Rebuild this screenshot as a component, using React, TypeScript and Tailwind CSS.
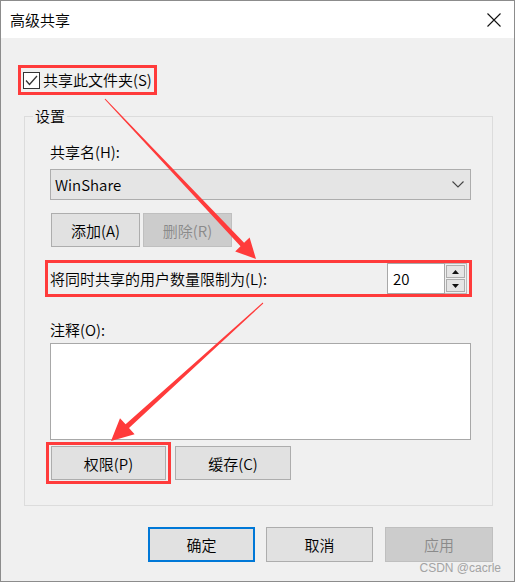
import React from 'react';

const cjk = { fontFamily: '"Noto Sans CJK SC", "Noto Sans", sans-serif', fontWeight: 350 };

function WinButton({
  children,
  className = '',
  disabled = false,
}: {
  children: React.ReactNode;
  className?: string;
  disabled?: boolean;
}) {
  return (
    <div
      className={`flex items-center justify-center border text-[15px] leading-none ${
        disabled
          ? 'bg-[#cccccc] border-[#bfbfbf] text-[#8a8a8a]'
          : 'bg-[#e1e1e1] border-[#adadad] text-black'
      } ${className}`}
    >
      {children}
    </div>
  );
}

function Arrows() {
  return (
    <svg
      className="absolute inset-0 pointer-events-none"
      width="515"
      height="582"
      viewBox="0 0 515 582"
    >
      {/* arrow from checkbox to limit row */}
      <polygon
        fill="#ff3b3b"
        points="103.6,98.3 104.4,97.7 243.1,241.8 248.6,236.6 255,258 234.2,250.4 239.5,245.2"
      />
      {/* arrow from limit row to permissions button */}
      <polygon
        fill="#ff3b3b"
        points="262.3,302.5 261.7,301.5 124.6,423.3 119,417.2 110,440 133.6,433.2 128,427"
      />
    </svg>
  );
}

export default function App() {
  return (
    <div
      className="relative w-[515px] h-[582px] border border-[#8c8c8c] bg-[#f0f0f0] flex flex-col text-black"
      style={cjk}
    >
      {/* Title bar */}
      <div className="h-[37px] bg-white flex items-center justify-between pl-[9px] pr-[13px]">
        <span className="text-[15px] leading-[20px]">高级共享</span>
        <svg width="14" height="14" viewBox="0 0 14 14">
          <path d="M0.5 0.5 L13.5 13.5 M13.5 0.5 L0.5 13.5" stroke="#111" strokeWidth="1.1" />
        </svg>
      </div>

      {/* Body */}
      <div className="flex-1 flex flex-col">
        {/* Share checkbox */}
        <div className="mt-[27px] ml-[17px] w-[139px] h-[30px] border-[3px] border-[#ff3b3b] flex items-center pl-[2px] gap-[3px]">
          <div className="w-[17px] h-[17px] border border-[#333333] bg-white flex items-center justify-center">
            <svg width="13" height="11" viewBox="0 0 13 11">
              <path d="M1 5.5 L4.5 9.5 L12 1" fill="none" stroke="#333" strokeWidth="1.3" />
            </svg>
          </div>
          <span className="text-[15px] leading-[20px] whitespace-nowrap">共享此文件夹(S)</span>
        </div>

        {/* Settings group */}
        <div className="mt-[21px] ml-[23px] w-[469px] h-[390px] border border-[#dcdcdc] flex flex-col">
          <div className="-mt-[11px] ml-[8px] self-start px-[2px] bg-[#f0f0f0] text-[15px] leading-[20px]">
            设置
          </div>

          <div className="pl-[25px] pr-[21px] flex flex-col">
            <div className="mt-[16px] text-[15px] leading-[20px]">共享名(H):</div>

            <div className="mt-[7px] h-[31px] border border-[#adadad] bg-[#e5e5e5] flex items-center justify-between pl-[4px] pr-[6px]">
              <span className="text-[15px] leading-none">WinShare</span>
              <svg width="12" height="7" viewBox="0 0 12 7">
                <path d="M0.5 0.5 L6 6 L11.5 0.5" fill="none" stroke="#444" strokeWidth="1.1" />
              </svg>
            </div>

            <div className="mt-[13px] ml-[1px] flex gap-[3px]">
              <WinButton className="w-[89px] h-[34px]">添加(A)</WinButton>
              <WinButton className="w-[89px] h-[34px]" disabled>
                删除(R)
              </WinButton>
            </div>

            {/* Limit row */}
            <div className="mt-[13px] -ml-[5px] w-[427px] h-[37px] border-[3px] border-[#ff3b3b] flex items-center justify-between pl-[2px] pr-[2px]">
              <span className="text-[15px] leading-[20px] whitespace-nowrap">将同时共享的用户数量限制为(L):</span>
              <div className="flex h-[31px]">
                <div className="w-[58px] h-full border border-[#a8a8a8] bg-white flex items-center pl-[5px]">
                  <span className="text-[15px] leading-none">20</span>
                </div>
                <div className="w-[22px] h-full border border-[#b9b9b9] border-l-0 bg-[#f0f0f0] flex flex-col p-[1px] gap-[1px]">
                  <div className="flex-1 bg-[#e5e5e5] border border-[#adadad] flex items-center justify-center">
                    <svg width="7" height="4" viewBox="0 0 7 4">
                      <path d="M0 4 L3.5 0 L7 4 Z" fill="#111" />
                    </svg>
                  </div>
                  <div className="flex-1 bg-[#e5e5e5] border border-[#adadad] flex items-center justify-center">
                    <svg width="7" height="4" viewBox="0 0 7 4">
                      <path d="M0 0 L3.5 4 L7 0 Z" fill="#111" />
                    </svg>
                  </div>
                </div>
              </div>
            </div>

            <div className="mt-[23px] text-[15px] leading-[20px]">注释(O):</div>
            <div className="mt-[3px] h-[97px] border border-[#a8a8a8] bg-white" />

            <div className="mt-[2px] -ml-[4px] flex items-center gap-[4px]">
              <div className="w-[125px] h-[42px] border-[3px] border-[#ff3b3b] flex items-center justify-center">
                <WinButton className="w-[115px] h-[34px]">权限(P)</WinButton>
              </div>
              <WinButton className="w-[116px] h-[34px]">缓存(C)</WinButton>
            </div>
          </div>
        </div>

        {/* Dialog buttons */}
        <div className="mt-[21px] flex justify-end pr-[21px] gap-[11px]">
          <div className="w-[107px] h-[35px] border-2 border-[#0078d7] bg-[#e1e1e1] flex items-center justify-center text-[15px] leading-none">
            确定
          </div>
          <WinButton className="w-[107px] h-[35px]">取消</WinButton>
          <WinButton className="w-[108px] h-[35px] ml-[1px]" disabled>
            应用
          </WinButton>
        </div>
      </div>

      <Arrows />

      <div
        className="absolute right-[13px] bottom-[7px] text-[12px] leading-none text-[#a3a3a3]"
        style={{ fontFamily: '"Liberation Sans", Arial, sans-serif', fontWeight: 400 }}
      >
        CSDN @cacrle
      </div>
    </div>
  );
}
